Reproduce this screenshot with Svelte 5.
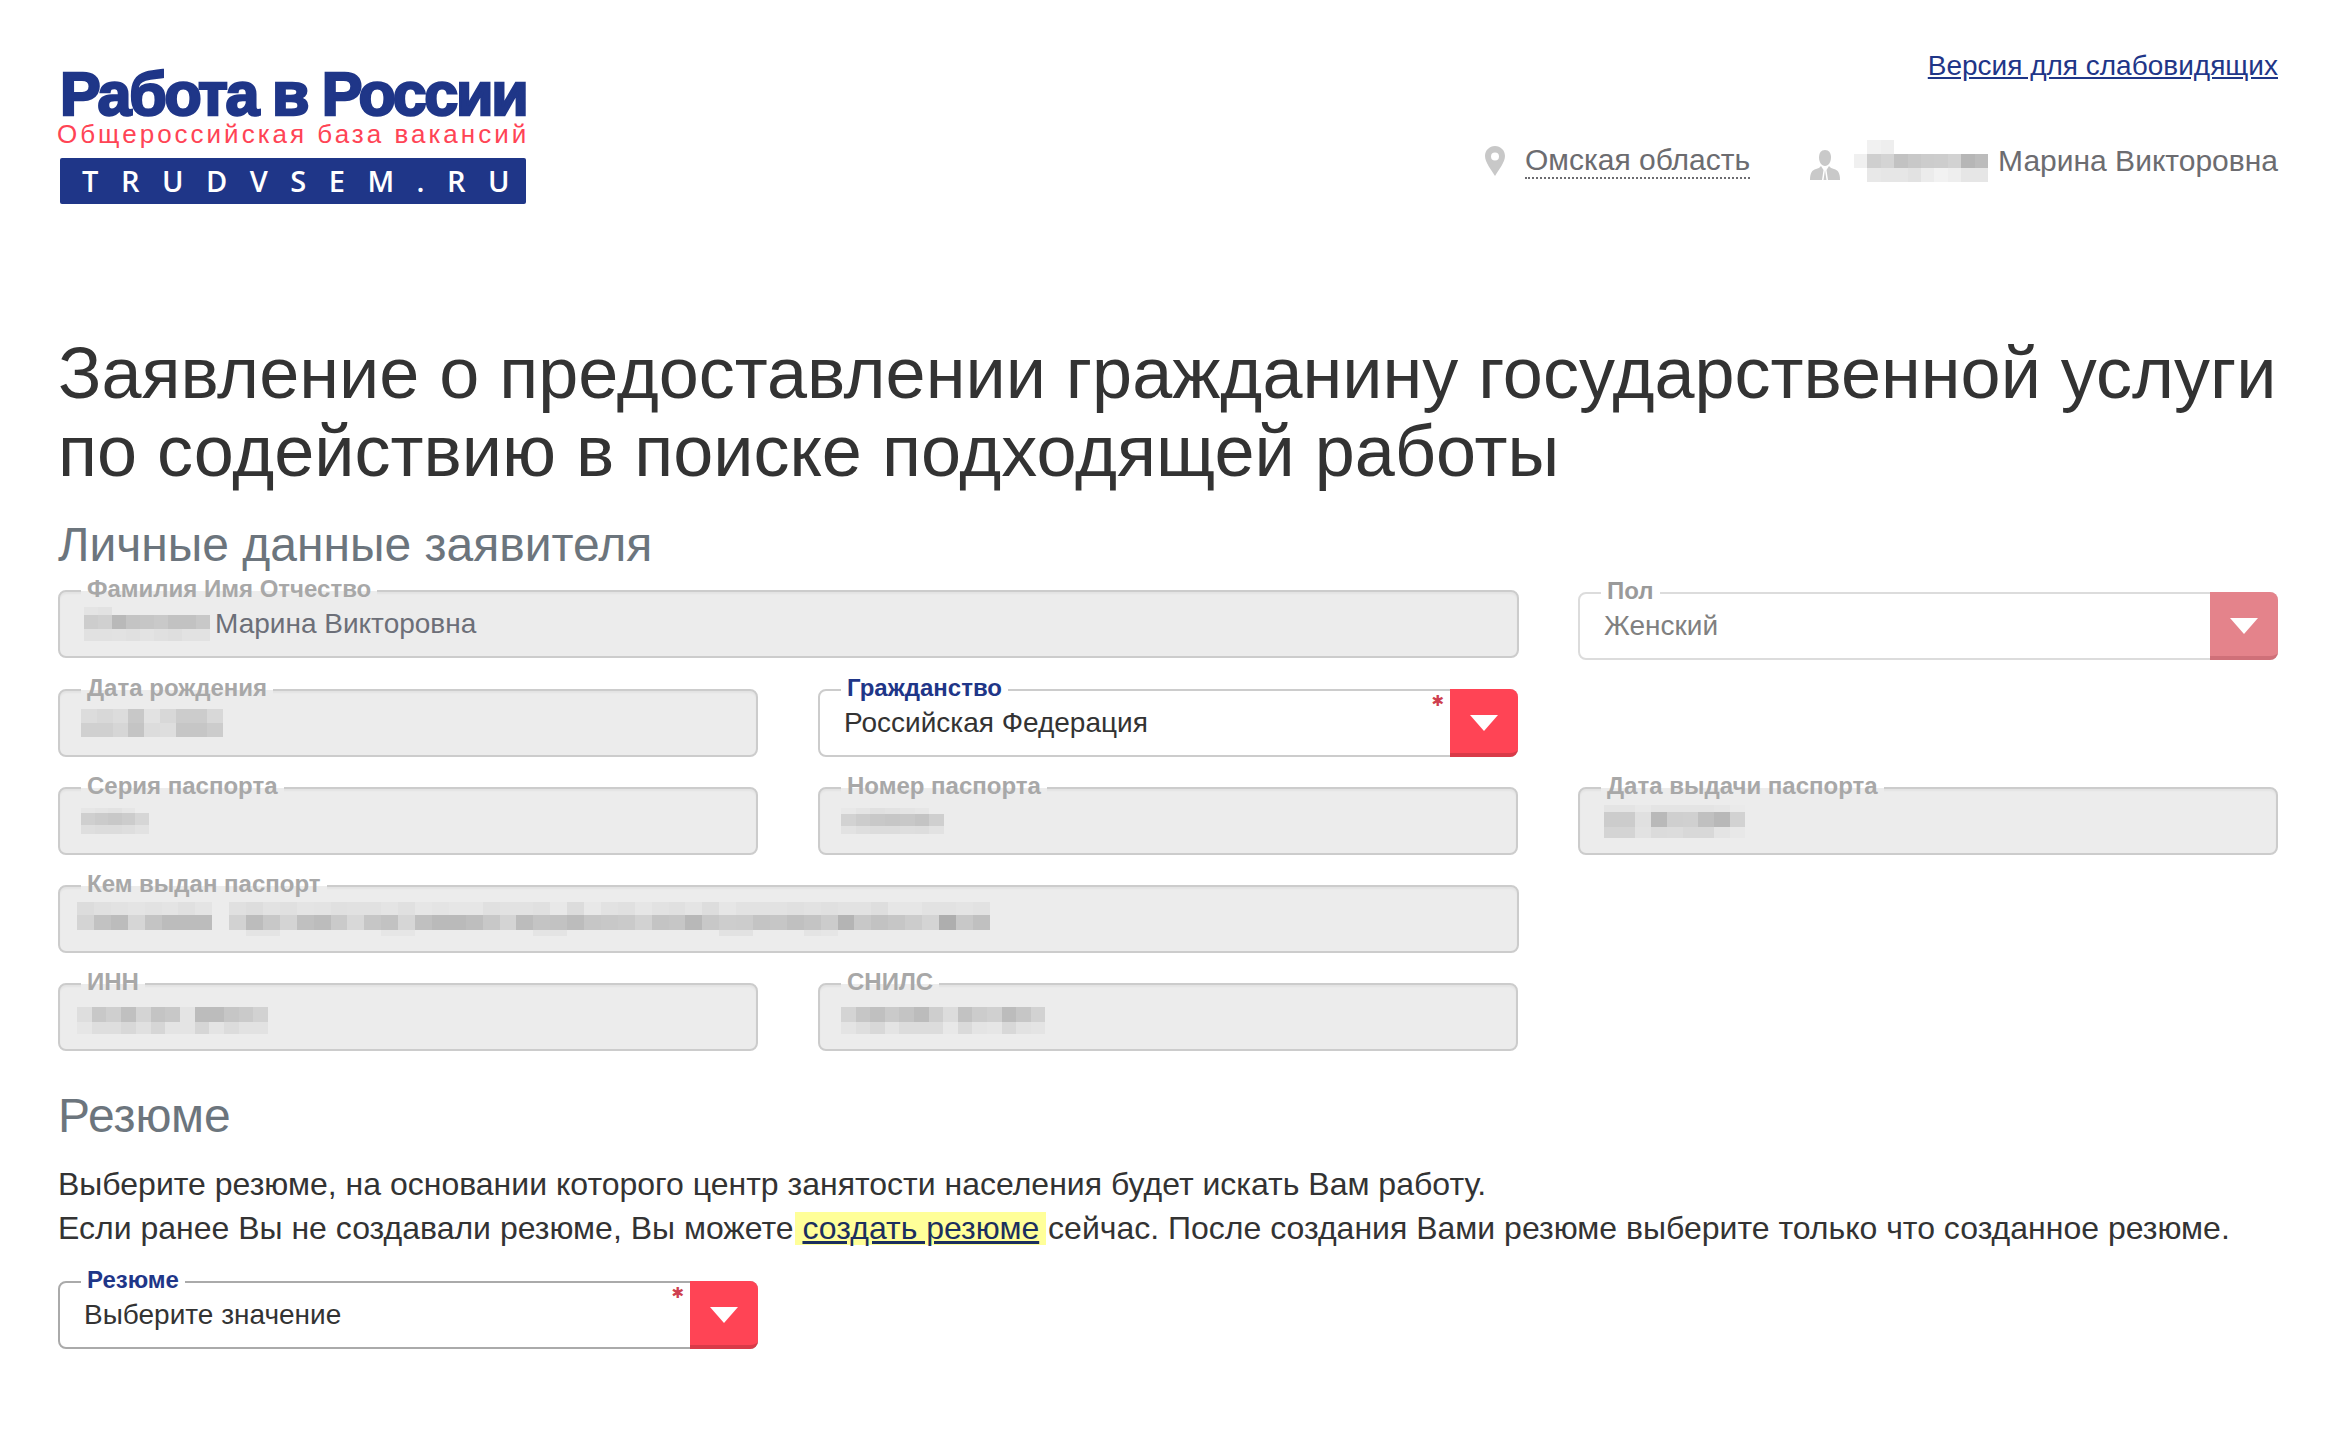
<script>
  const mosaics = {
    header: { w: 13.4, rows: [[14, 'ff f1 ee ff ff ff ff ff ff ff'], [14, 'f0 cf d4 c2 c8 cc cd d2 b6 bc'], [14, 'ff e8 e6 e6 e2 ec f2 ee e6 e6']] },
    name: { w: 14, rows: [[8, 'e4 e2 ec ec ec ec ec ec ec'], [14, 'cd d0 b9 c4 c6 c9 c2 c2 c8'], [12, 'e1 e1 e2 e0 e3 e0 de e2 e2']] },
    birth: { w: 15.8, rows: [[14, 'dc d8 dc c8 e2 d8 cc cc d8'], [14, 'd0 d0 d6 c4 dc de c6 c6 cc']] },
    series: { w: 13.6, rows: [[5, 'e6 e4 e2 e6 ec'], [12, 'cf cb c8 cc d6'], [9, 'de dc dc de e2']] },
    number: { w: 14.7, rows: [[6, 'e8 e4 e0 e2 e4 e6 ec'], [12, 'd2 cc c8 c6 c8 c4 cf'], [8, 'e2 de dc dc de dd e2']] },
    issueDate: { w: 15.7, rows: [[7, 'e4 e4 e8 e4 e4 e4 e4 e6 ea'], [15, 'cc cc e0 b9 cf d0 c0 b8 d2'], [11, 'd4 d4 e2 db dc d8 d8 e4 e8']] },
    issued: { w: 16.9, rows: [
      [13, 'dc e0 e2 e4 e2 e4 e0 e4 ec e0 dd e2 e0 e4 e3 e0 e1 e1 e4 e0 e6 e4 e6 e6 e0 e2 e2 e0 e8 dc e8 e2 e0 e6 e2 e0 e4 dd e6 e2 e2 e2 e0 e2 e0 e2 e2 de e6 e6 e2 e2 e4 e2'],
      [15, 'd4 c2 bc d6 c4 bc bc bc ec d2 bc c8 d4 c0 bc ca d8 c6 c2 d6 c0 ba ba be c8 d4 bc c4 c2 bc c6 c8 ca d2 c4 c6 b8 c8 cd cc c4 c6 c0 c4 cc b4 c8 c2 c6 cc d4 ae c8 c0'],
      [6, 'ec ec ec ec ec ec ec ec ec ec e4 e4 ec ec ec ec ec ec e6 e6 ec ec ec ec ec ec ec e4 e4 ec ec ec ec ec ec ec ec ec e2 e2 ec ec ec e4 e6 ec ec ec ec ec ec ec ec ec']] },
    inn: { w: 14.7, rows: [[15, 'de c8 cf c0 d4 c4 c8 e4 bc bc c6 ca d2'], [12, 'e6 de de d8 e0 d6 e4 e4 d6 e4 dc e2 e2']] },
    snils: { w: 14.6, rows: [[15, 'd4 c6 c0 ca c4 bc ce dc c2 cc d0 bc c6 d2'], [12, 'e4 de d8 e4 dc dc dc e8 da e4 e6 d8 e2 e4']] }
  };
  const grey = (v) => '#' + v + v + v;
</script>

{#snippet mosaic(m)}
  {@const n = m.rows[0][1].split(' ').length}
  {@const total = m.rows.reduce((s, r) => s + r[0], 0)}
  <svg class="mosaic" width={n * m.w} height={total} shape-rendering="crispEdges" aria-hidden="true">
    {#each m.rows as r, ri}
      {@const y = m.rows.slice(0, ri).reduce((s, q) => s + q[0], 0)}
      {#each r[1].split(' ') as c, ci}
        <rect x={ci * m.w} {y} width={m.w} height={r[0]} fill={grey(c)} />
      {/each}
    {/each}
  </svg>
{/snippet}

{#snippet caret()}
  <span class="btn"><svg width="28" height="16" viewBox="0 0 28 16"><path d="M0 0h28L14 16z" fill="#fff" /></svg></span>
{/snippet}

{#snippet field(label, m, cls = '')}
  <div class="field off {cls}">
    <span class="legend">{label}</span>
    {#if m}{@render mosaic(m)}{/if}
  </div>
{/snippet}

<div class="page">
  <header class="top">
    <div class="logo">
      <div class="l1">Работа в России</div>
      <div class="l2">Общероссийская база вакансий</div>
      <div class="l3"><span class="spaced">TRUDVSEM.R</span>U</div>
    </div>
    <div class="tools">
      <a class="eye" href="#v">Версия для слабовидящих</a>
      <div class="userline">
        <svg class="pin" width="20" height="30" viewBox="0 0 20 30"><path fill-rule="evenodd" d="M10 0C4.400 0 0 4.400 0 10c0 6.500 6.500 14 10 20 3.500-6 10-13.500 10-20C20 4.400 15.600 0 10 0zm0 6.500a4 4 0 1 1 0 8 4 4 0 0 1 0-8z" fill="#c8c8c8" /></svg>
        <span class="region">Омская область</span>
        <svg class="user" width="30" height="30" viewBox="0 0 30 30"><path d="M15 0c4 0 6 3 6 7.500S18.500 16 15 16s-6-4-6-8.500S11 0 15 0z" fill="#c9c9c9" /><path d="M0 30c0-7 2-10 6-11 2-.5 4-1.500 5-3l2.500 4-1.500 10zM30 30c0-7-2-10-6-11-2-.5-4-1.500-5-3l-2.500 4 1.500 10zM15 20l-1.500 10h3z" fill="#c9c9c9" /></svg>
        {@render mosaic(mosaics.header)}
        <span class="uname">Марина Викторовна</span>
      </div>
    </div>
  </header>

  <h1>Заявление о предоставлении гражданину государственной услуги<br />по содействию в поиске подходящей работы</h1>
  <h2 class="h-personal">Личные данные заявителя</h2>

  <div class="grid">
    <div class="field off span2">
      <span class="legend">Фамилия Имя Отчество</span>
      {@render mosaic(mosaics.name)}<span class="val">Марина Викторовна</span>
    </div>
    <div class="field sel faded">
      <span class="legend">Пол</span>
      <span class="val">Женский</span>
      {@render caret()}
    </div>

    {@render field('Дата рождения', mosaics.birth, 'mid')}
    <div class="field sel">
      <span class="legend act">Гражданство</span>
      <span class="val">Российская Федерация</span>
      <span class="req">✱</span>
      {@render caret()}
    </div>
    <div></div>

    {@render field('Серия паспорта', mosaics.series, 'mid')}
    {@render field('Номер паспорта', mosaics.number, 'mid')}
    {@render field('Дата выдачи паспорта', mosaics.issueDate)}

    {@render field('Кем выдан паспорт', mosaics.issued, 'span2 tight')}
    <div></div>

    {@render field('ИНН', mosaics.inn, 'tight low')}
    {@render field('СНИЛС', mosaics.snils, 'mid low')}
  </div>

  <h2 class="h-resume">Резюме</h2>
  <p>Выберите резюме, на основании которого центр занятости населения будет искать Вам работу.<br />Если ранее Вы не создавали резюме, Вы можете <a class="mark" href="#r">создать резюме</a> сейчас. После создания Вами резюме выберите только что созданное резюме.</p>

  <div class="field sel strong resume">
    <span class="legend act">Резюме</span>
    <span class="val">Выберите значение</span>
    <span class="req">✱</span>
    {@render caret()}
  </div>
</div>

<style>
  :global(body) {
    margin: 0;
    background: #fff;
    font-family: 'Liberation Sans', Arial, sans-serif;
  }
  .page {
    padding: 0 62px 92px 58px;
    color: #333;
  }
  .top {
    display: flex;
    justify-content: space-between;
    height: 334px;
    box-sizing: border-box;
  }
  .logo {
    margin: 64px 0 0 2px;
    width: 466px;
    display: flex;
    flex-direction: column;
  }
  .l1 {
    font-size: 61px;
    font-weight: 700;
    line-height: 60px;
    height: 56px;
    letter-spacing: -2.300px;
    color: #1f3688;
    -webkit-text-stroke: 2.400px #1f3688;
    white-space: nowrap;
  }
  .l2 {
    font-size: 26px;
    line-height: 28px;
    height: 28px;
    letter-spacing: 3px;
    color: #ff4455;
    white-space: nowrap;
    margin-left: -3px;
    width: 472px;
  }
  .l3 {
    margin-top: 10px;
    height: 46px;
    background: #1f3688;
    border-radius: 2px;
    color: #fff;
    font-family: 'Open Sans', sans-serif;
    font-weight: 600;
    font-size: 29px;
    line-height: 46px;
    padding-left: 22px;
    white-space: nowrap;
  }
  .spaced {
    letter-spacing: 22.500px;
  }
  .tools {
    display: flex;
    flex-direction: column;
    align-items: flex-end;
    padding-top: 49px;
  }
  .eye {
    color: #1f3688;
    font-size: 28px;
    line-height: 34px;
  }
  .userline {
    display: flex;
    align-items: center;
    margin-top: 57px;
    height: 42px;
    color: #6c6c70;
    font-size: 30px;
  }
  .pin {
    margin-right: 20px;
  }
  .region {
    border-bottom: 2px dotted #6c6c70;
    line-height: 34px;
    margin-right: 60px;
  }
  .user {
    margin-right: 14px;
    margin-top: 8px;
  }
  .uname {
    margin-left: 10px;
  }
  h1 {
    margin: 0;
    font-weight: 400;
    font-size: 72px;
    line-height: 78px;
    color: #333;
    white-space: nowrap;
  }
  h2 {
    margin: 0;
    font-weight: 400;
    font-size: 48px;
    line-height: 56px;
    color: #6c757d;
  }
  .h-personal {
    margin-top: 27px;
    margin-bottom: 17px;
  }
  .grid {
    display: grid;
    grid-template-columns: repeat(3, 700px);
    column-gap: 60px;
    row-gap: 30px;
  }
  .span2 {
    grid-column: span 2;
    width: 1461px;
  }
  .field {
    position: relative;
    height: 68px;
    box-sizing: border-box;
    border: 2px solid #ccc;
    border-radius: 8px;
    padding-left: 24px;
    display: flex;
    align-items: center;
    font-size: 28px;
    color: #333;
    background: #fff;
  }
  .tight {
    padding-left: 17px;
  }
  .mid {
    padding-left: 21px;
  }
  .low .mosaic {
    margin-top: 6px;
  }
  .off {
    background: #ececec;
    color: #6c6f78;
    box-shadow: inset 0 2px 2px rgba(0, 0, 0, 0.04);
  }
  .legend {
    position: absolute;
    left: 21px;
    top: -17px;
    padding: 0 6px;
    font-size: 24px;
    font-weight: 700;
    line-height: 28px;
    color: #a8a8a8;
    background: linear-gradient(#fff 58%, #ececec 58%);
    white-space: nowrap;
  }
  .sel .legend {
    background: #fff;
    height: 19px;
  }
  .legend.act {
    color: #1f3688;
  }
  .mosaic {
    display: block;
    flex: none;
  }
  .val {
    white-space: nowrap;
  }
  .off .val {
    margin-left: 5px;
  }
  .btn {
    position: absolute;
    right: -2px;
    top: -2px;
    bottom: -2px;
    width: 68px;
    background: #ff4455;
    border-bottom: 4px solid #d93a48;
    box-sizing: border-box;
    border-radius: 0 8px 8px 0;
    padding-top: 3px;
    display: flex;
    align-items: center;
    justify-content: center;
  }
  .req {
    position: absolute;
    right: 72px;
    top: 2px;
    color: #cf3f50;
    font-size: 15px;
    line-height: 16px;
    font-family: 'DejaVu Sans', sans-serif;
  }
  .faded {
    margin-top: 2px;
    margin-bottom: -1px;
    border-color: #dcdcdc;
    color: #808080;
  }
  .faded .legend {
    color: #9a9a9a;
  }
  .faded .btn {
    background: #e4838b;
    border-bottom-color: #cf7079;
  }
  .h-resume {
    margin-top: 37px;
  }
  p {
    margin: 18px 0 0;
    font-size: 32px;
    line-height: 44px;
    color: #333;
    white-space: nowrap;
  }
  .mark {
    display: inline-block;
    line-height: 33px;
    background: #ffff99;
    color: #1b2f5e;
    padding: 0 7px;
    margin: 0 -7px;
  }
  .resume {
    width: 700px;
    margin-top: 31px;
  }
  .strong {
    border-color: #aaa;
  }
</style>
